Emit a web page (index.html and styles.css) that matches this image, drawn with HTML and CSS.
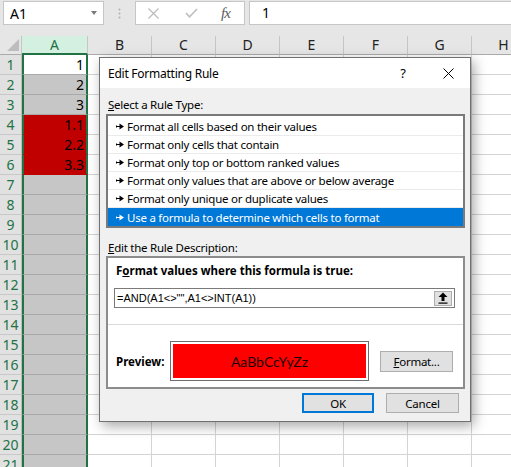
FILE: index.html
```html
<!DOCTYPE html>
<html lang="en">
<head>
  <meta charset="UTF-8">
  <title>Edit Formatting Rule</title>
  <link rel="stylesheet" href="styles.css">
</head>
<body>
  <div class="topbar">
    <div class="namebox"><span>A1</span><span class="caret"></span></div>
    <div class="grip">
      <svg width="3" height="11" viewBox="0 0 3 11"><circle cx="1.5" cy="1.5" r="1" /><circle cx="1.5" cy="5.5" r="1" /><circle cx="1.5" cy="9.5" r="1" /></svg>
    </div>
    <div class="fxbox">
      <svg class="ico-x" width="11" height="11" viewBox="0 0 11 11"><path d="M0.5 0.5L10.5 10.5M10.5 0.5L0.5 10.5" /></svg>
      <svg class="ico-check" width="13" height="10" viewBox="0 0 13 10"><path d="M1 5L4.5 8.8L12 1" /></svg>
      <span class="fx">fx</span>
    </div>
    <div class="formula">1</div>
  </div>

  <div class="sheet">
    <div class="row head">
      <div class="corner"><span></span></div>
      <div class="col sel">A</div><div class="col">B</div><div class="col">C</div><div class="col">D</div>
      <div class="col">E</div><div class="col">F</div><div class="col">G</div><div class="col">H</div>
    </div>
    <div class="row"><div class="rn">1</div><div class="ca active">1</div><span></span><span></span><span></span><span></span><span></span><span></span><span></span></div>
    <div class="row"><div class="rn">2</div><div class="ca">2</div><span></span><span></span><span></span><span></span><span></span><span></span><span></span></div>
    <div class="row"><div class="rn">3</div><div class="ca">3</div><span></span><span></span><span></span><span></span><span></span><span></span><span></span></div>
    <div class="row"><div class="rn">4</div><div class="ca red">1.1</div><span></span><span></span><span></span><span></span><span></span><span></span><span></span></div>
    <div class="row"><div class="rn">5</div><div class="ca red">2.2</div><span></span><span></span><span></span><span></span><span></span><span></span><span></span></div>
    <div class="row"><div class="rn">6</div><div class="ca red">3.3</div><span></span><span></span><span></span><span></span><span></span><span></span><span></span></div>
    <div class="row"><div class="rn">7</div><div class="ca"></div><span></span><span></span><span></span><span></span><span></span><span></span><span></span></div>
    <div class="row"><div class="rn">8</div><div class="ca"></div><span></span><span></span><span></span><span></span><span></span><span></span><span></span></div>
    <div class="row"><div class="rn">9</div><div class="ca"></div><span></span><span></span><span></span><span></span><span></span><span></span><span></span></div>
    <div class="row"><div class="rn">10</div><div class="ca"></div><span></span><span></span><span></span><span></span><span></span><span></span><span></span></div>
    <div class="row"><div class="rn">11</div><div class="ca"></div><span></span><span></span><span></span><span></span><span></span><span></span><span></span></div>
    <div class="row"><div class="rn">12</div><div class="ca"></div><span></span><span></span><span></span><span></span><span></span><span></span><span></span></div>
    <div class="row"><div class="rn">13</div><div class="ca"></div><span></span><span></span><span></span><span></span><span></span><span></span><span></span></div>
    <div class="row"><div class="rn">14</div><div class="ca"></div><span></span><span></span><span></span><span></span><span></span><span></span><span></span></div>
    <div class="row"><div class="rn">15</div><div class="ca"></div><span></span><span></span><span></span><span></span><span></span><span></span><span></span></div>
    <div class="row"><div class="rn">16</div><div class="ca"></div><span></span><span></span><span></span><span></span><span></span><span></span><span></span></div>
    <div class="row"><div class="rn">17</div><div class="ca"></div><span></span><span></span><span></span><span></span><span></span><span></span><span></span></div>
    <div class="row"><div class="rn">18</div><div class="ca"></div><span></span><span></span><span></span><span></span><span></span><span></span><span></span></div>
    <div class="row"><div class="rn">19</div><div class="ca"></div><span></span><span></span><span></span><span></span><span></span><span></span><span></span></div>
    <div class="row"><div class="rn">20</div><div class="ca"></div><span></span><span></span><span></span><span></span><span></span><span></span><span></span></div>
    <div class="row"><div class="rn">21</div><div class="ca"></div><span></span><span></span><span></span><span></span><span></span><span></span><span></span></div>
  </div>

  <div class="dialog">
    <div class="title">
      <span>Edit Formatting Rule</span>
      <span class="help">?</span>
      <svg class="close" width="11" height="11" viewBox="0 0 11 11"><path d="M0.5 0.5L10.5 10.5M10.5 0.5L0.5 10.5" /></svg>
    </div>
    <div class="body">
      <div class="label"><u>S</u>elect a Rule Type:</div>
      <div class="list">
        <div class="item"><svg class="arrow" width="8" height="7" viewBox="0 0 8 7"><path d="M0.5 2.5v2M0.5 3.5h4" /><path class="head" d="M3.5 0.5L8 3.5L3.5 6.5z" /></svg>Format all cells based on their values</div>
        <div class="item"><svg class="arrow" width="8" height="7" viewBox="0 0 8 7"><path d="M0.5 2.5v2M0.5 3.5h4" /><path class="head" d="M3.5 0.5L8 3.5L3.5 6.5z" /></svg>Format only cells that contain</div>
        <div class="item"><svg class="arrow" width="8" height="7" viewBox="0 0 8 7"><path d="M0.5 2.5v2M0.5 3.5h4" /><path class="head" d="M3.5 0.5L8 3.5L3.5 6.5z" /></svg>Format only top or bottom ranked values</div>
        <div class="item"><svg class="arrow" width="8" height="7" viewBox="0 0 8 7"><path d="M0.5 2.5v2M0.5 3.5h4" /><path class="head" d="M3.5 0.5L8 3.5L3.5 6.5z" /></svg>Format only values that are above or below average</div>
        <div class="item"><svg class="arrow" width="8" height="7" viewBox="0 0 8 7"><path d="M0.5 2.5v2M0.5 3.5h4" /><path class="head" d="M3.5 0.5L8 3.5L3.5 6.5z" /></svg>Format only unique or duplicate values</div>
        <div class="item sel"><svg class="arrow" width="8" height="7" viewBox="0 0 8 7"><path d="M0.5 2.5v2M0.5 3.5h4" /><path class="head" d="M3.5 0.5L8 3.5L3.5 6.5z" /></svg>Use a formula to determine which cells to format</div>
      </div>

      <div class="label desc-label"><u>E</u>dit the Rule Description:</div>
      <div class="descbox">
        <div class="rule-title">F<u>o</u>rmat values where this formula is true:</div>
        <div class="formula-input">
          <span>=AND(A1&lt;&gt;"",A1&lt;&gt;INT(A1))</span>
          <div class="collapse">
            <svg width="10" height="12" viewBox="0 0 10 12"><path d="M5 0.5L9.5 5H6.5V9H3.5V5H0.5Z" /><rect x="0.5" y="10.5" width="9" height="1.2" /></svg>
          </div>
        </div>
        <div class="sep"></div>
        <div class="preview-row">
          <span class="preview-label">Preview:</span>
          <div class="preview"><div class="swatch">AaBbCcYyZz</div></div>
          <div class="btn fmt-btn"><span><u>F</u>ormat...</span></div>
        </div>
      </div>

      <div class="actions">
        <div class="btn ok">OK</div>
        <div class="btn">Cancel</div>
      </div>
    </div>
  </div>
</body>
</html>
```

FILE: styles.css
```css
body {
  margin: 0;
  width: 511px;
  height: 467px;
  overflow: hidden;
  position: relative;
  background-color: #fff;
  font-family: 'Noto Sans', sans-serif;
  color: #000;
}

/* formula bar */
.topbar {
  display: flex;
  align-items: flex-start;
  height: 36px;
  box-sizing: border-box;
  padding-top: 1px;
  background-color: #e6e6e6;
}
.namebox {
  margin-left: 3px;
  width: 101px;
  height: 24px;
  box-sizing: border-box;
  border: 1px solid #c6c6c6;
  background-color: #fff;
  display: flex;
  align-items: center;
  padding: 0 6px 0 6px;
  font-size: 14px;
}
.namebox .caret {
  margin-left: auto;
  border-left: 3px solid transparent;
  border-right: 3px solid transparent;
  border-top: 4px solid #7a7a7a;
}
.grip {
  width: 31px;
  height: 24px;
  display: flex;
  align-items: center;
  justify-content: center;
}
.grip svg { fill: #b0b0b0; }
.fxbox {
  width: 110px;
  height: 24px;
  box-sizing: border-box;
  border: 1px solid #c6c6c6;
  background-color: #fff;
  display: flex;
  align-items: center;
}
.ico-x {
  margin-left: 12px;
  stroke: #bdbdbd;
  stroke-width: 1.3;
  fill: none;
}
.ico-check {
  margin-left: 26px;
  stroke: #c2c2c2;
  stroke-width: 1.8;
  fill: none;
}
.fx {
  margin-left: 23px;
  font-family: 'Liberation Serif', serif;
  font-style: italic;
  font-size: 15px;
  color: #5a5a5a;
  letter-spacing: -1px;
}
.formula {
  margin-left: 4px;
  flex: 1;
  height: 24px;
  box-sizing: border-box;
  border: 1px solid #c6c6c6;
  border-right: none;
  background-color: #fff;
  padding-left: 12px;
  font-size: 14px;
  line-height: 22px;
}

/* grid */
.row {
  display: grid;
  grid-template-columns: 22px 66px 64px 64px 64px 64px 64px 64px 64px;
  width: max-content;
  height: 20px;
}
.row > * {
  box-sizing: border-box;
  border-right: 1px solid #d4d4d4;
  border-bottom: 1px solid #d4d4d4;
}
.row.head {
  height: 19px;
}
.corner {
  background-color: #e6e6e6;
  border-right-color: #c6c6c6 !important;
  border-bottom-color: #ababab !important;
  display: flex;
  align-items: flex-end;
  justify-content: flex-end;
  padding: 0 2px 3px 0;
}
.corner span {
  border-left: 12px solid transparent;
  border-bottom: 12px solid #bdbdbd;
}
.col {
  background-color: #e6e6e6;
  text-align: center;
  font-size: 14px;
  line-height: 18px;
  color: #222;
  border-right-color: #c6c6c6 !important;
  border-bottom-color: #ababab !important;
}
.col.sel {
  background-color: #d3f0e0;
  color: #217346;
  border-bottom: 2px solid #217346 !important;
  line-height: 17px;
}
.rn {
  background-color: #e1e1e1;
  color: #217346;
  font-size: 14px;
  line-height: 19px;
  text-align: center;
  border-right-color: #bdbdbd !important;
  border-bottom-color: #c8c8c8 !important;
}
.ca {
  background-color: #c6c6c6;
  border-left: 2px solid #217346;
  border-right: 2px solid #217346 !important;
  border-bottom-color: #a9a9a9 !important;
  text-align: right;
  padding-right: 2px;
  font-size: 14px;
  line-height: 19px;
}
.ca.active { background-color: #fff; }
.ca.red {
  background-color: #c00000;
  border-bottom-color: #c00000 !important;
}

/* dialog */
.dialog {
  position: absolute;
  left: 99px;
  top: 57px;
  width: 372px;
  height: 365px;
  box-sizing: border-box;
  border: 1px solid #707070;
  background-color: #f0f0f0;
  box-shadow: 3px 4px 12px rgba(0, 0, 0, 0.35);
  display: flex;
  flex-direction: column;
  font-size: 11.5px;
  letter-spacing: -0.25px;
}
.title {
  height: 30px;
  flex-shrink: 0;
  background-color: #fff;
  display: flex;
  align-items: center;
  padding-left: 8px;
  font-size: 12px;
}
.help {
  margin-left: auto;
  width: 20px;
  text-align: center;
  font-size: 13px;
}
.close {
  margin-left: 30px;
  margin-right: 16px;
  stroke: #000;
  stroke-width: 1;
  fill: none;
}
.body {
  flex: 1;
  padding: 0 5px 0 6px;
}
.label {
  height: 26px;
  box-sizing: border-box;
  padding: 9px 0 0 2px;
  line-height: 16px;
}
.desc-label {
  height: 28px;
  padding-top: 12px;
}
.list {
  height: 114px;
  box-sizing: border-box;
  border: 2px solid #7a7a7a;
  background-color: #fff;
  padding-top: 2px;
}
.item {
  height: 18px;
  box-sizing: border-box;
  border-bottom: 1px solid #ebebeb;
  display: flex;
  align-items: center;
  padding-left: 8px;
  gap: 3px;
}
.item.sel {
  background-color: #0078d7;
  color: #fff;
  border-bottom: none;
}
.arrow path { stroke: currentColor; stroke-width: 1; fill: none; }
.arrow path.head { stroke: none; fill: currentColor; }
.descbox {
  height: 133px;
  box-sizing: border-box;
  border: 2px solid #8c8c8c;
  background-color: #fff;
}
.rule-title {
  font-weight: bold;
  padding: 5px 0 0 8px;
  line-height: 16px;
  letter-spacing: 0;
}
.formula-input {
  margin: 9px 8px 0 6px;
  height: 20px;
  box-sizing: border-box;
  border: 1px solid #7a7a7a;
  display: flex;
  align-items: center;
  padding-left: 2px;
  font-family: 'Liberation Sans', sans-serif;
  font-size: 11px;
  letter-spacing: 0;
}
.collapse {
  margin-left: auto;
  margin-right: 2px;
  width: 18px;
  height: 15px;
  box-sizing: border-box;
  background-color: #e1e1e1;
  border: 1px solid #adadad;
  display: flex;
  align-items: center;
  justify-content: center;
}
.sep {
  margin-top: 16px;
  border-top: 1px solid #d9d9d9;
}
.preview-row {
  display: flex;
  align-items: center;
  margin-top: 16px;
  padding-left: 8px;
}
.preview-label {
  font-weight: bold;
  width: 54px;
  letter-spacing: 0;
}
.preview {
  width: 199px;
  height: 40px;
  box-sizing: border-box;
  border: 1px solid #6d6d6d;
  padding: 2px;
  background-color: #fff;
}
.swatch {
  height: 100%;
  background-color: #f00;
  display: flex;
  align-items: center;
  justify-content: center;
  font-family: 'Lato', sans-serif;
  font-size: 14px;
  letter-spacing: 0;
  color: #1a0000;
}
.btn {
  width: 73px;
  height: 20px;
  box-sizing: border-box;
  border: 1px solid #adadad;
  background-color: #e1e1e1;
  display: flex;
  align-items: center;
  justify-content: center;
}
.fmt-btn {
  margin-left: 11px;
  height: 21px;
}
.actions {
  display: flex;
  justify-content: flex-end;
  gap: 12px;
  padding: 4px 6px 0 0;
}
.btn.ok {
  width: 72px;
  border: 2px solid #0078d7;
}
```
